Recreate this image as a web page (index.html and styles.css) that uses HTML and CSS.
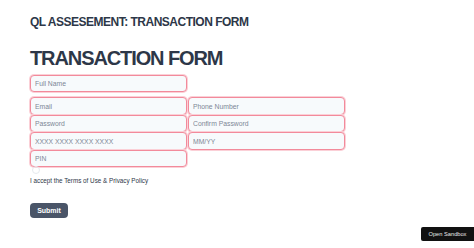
FILE: index.html
```html
<!DOCTYPE html>
<html>
<head>
<meta charset="utf-8">
<link rel="stylesheet" href="styles.css">
</head>
<body>
<div class="page">
  <h1 class="app-title">QL ASSESEMENT: TRANSACTION FORM</h1>
  <h2 class="form-title">TRANSACTION FORM</h2>
  <form class="form">
    <div class="row single">
      <input class="field" type="text" placeholder="Full Name">
    </div>
    <div class="grid">
      <input class="field" type="text" placeholder="Email">
      <input class="field" type="text" placeholder="Phone Number">
      <input class="field" type="password" placeholder="Password">
      <input class="field" type="password" placeholder="Confirm Password">
      <input class="field" type="text" placeholder="XXXX XXXX XXXX XXXX">
      <input class="field" type="text" placeholder="MM/YY">
      <input class="field" type="text" placeholder="PIN">
    </div>
    <div class="check-row"><span class="check"></span></div>
    <p class="terms">I accept the Terms of Use &amp; Privacy Policy</p>
    <button class="submit" type="button">Submit</button>
  </form>
</div>
<div class="sandbox">Open Sandbox</div>
</body>
</html>
```
FILE: styles.css
```css
html, body {
  margin: 0;
  padding: 0;
  background: #ffffff;
  font-family: "Liberation Sans", Arial, sans-serif;
  color: #2d3748;
}
.page {
  padding: 14px 0 0 30px;
}
.app-title {
  margin: 0;
  font-size: 12px;
  font-weight: 700;
  letter-spacing: -0.5px;
  line-height: 16px;
}
.form-title {
  margin: 18px 0 0 0;
  font-size: 20px;
  font-weight: 700;
  letter-spacing: -1.1px;
  line-height: 20px;
}
.form {
  margin-top: 4px;
  display: flex;
  flex-direction: column;
  align-items: flex-start;
}
.row.single {
  width: 158px;
  margin-bottom: 5px;
}
.grid {
  display: grid;
  grid-template-columns: 158px 158px;
  grid-auto-rows: 17.5px;
  column-gap: 0;
  row-gap: 0;
}
.field {
  box-sizing: border-box;
  width: 157px;
  height: 17.5px;
  margin: 0;
  padding: 0 4px;
  border: 1px solid #f28a9b;
  box-shadow: 0 0 0 1px #fbd0d7;
  border-radius: 4px;
  background: #f7fafc;
  font-family: "Liberation Sans", Arial, sans-serif;
  font-size: 6.8px;
  color: #2d3748;
  outline: none;
}
.field::placeholder {
  color: #7d8796;
}
.check-row {
  height: 7px;
  padding-left: 2px;
  margin-top: -1px;
}
.check {
  display: block;
  width: 6px;
  height: 6px;
  border: 1px solid #e6eaee;
  border-radius: 50%;
}
.terms {
  margin: 3px 0 0 0;
  font-size: 6.3px;
  line-height: 10px;
  color: #2d3748;
}
.submit {
  margin-top: 17px;
  width: 38px;
  height: 15px;
  padding: 0;
  border: 0;
  border-radius: 4px;
  background: #4a5568;
  color: #ffffff;
  font-family: "Liberation Sans", Arial, sans-serif;
  font-size: 7px;
  font-weight: 700;
}
.sandbox {
  position: fixed;
  right: 0;
  bottom: 7px;
  width: 53px;
  height: 14px;
  background: #111111;
  color: #e8e8e8;
  font-size: 5.7px;
  line-height: 14px;
  text-align: center;
  border-radius: 2px 0 0 2px;
}
```
